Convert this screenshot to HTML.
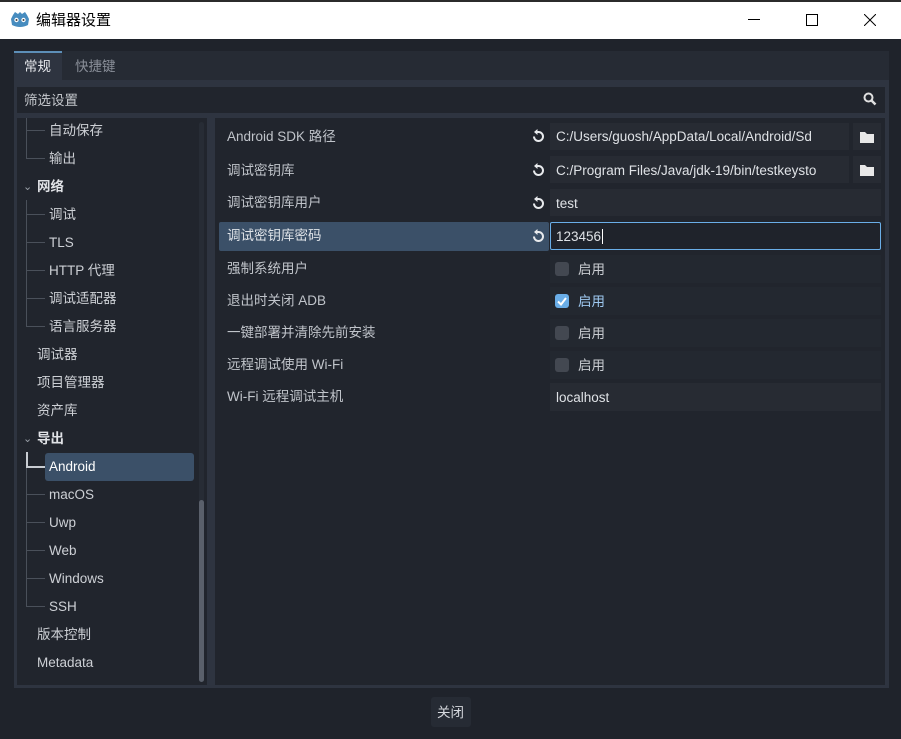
<!DOCTYPE html>
<html><head><meta charset="utf-8"><style>
*{margin:0;padding:0;box-sizing:border-box}
body{width:901px;height:739px;background:#1f232b;font-family:"Liberation Sans","Noto Sans CJK SC",sans-serif;font-size:13.5px;color:#cdd0d5;position:relative;overflow:hidden}
.a{position:absolute}
.t{position:absolute;white-space:nowrap;line-height:16px;margin-top:1px}
</style></head><body>
<div class="a" style="left:0;top:0;width:901px;height:2px;background:#2b2b2b"></div>
<div class="a" style="left:0;top:2px;width:901px;height:37px;background:#fff"></div>
<svg class="a" style="left:10px;top:11px" width="20" height="18" viewBox="0 0 20 18"><path d="M3 4 L5 1 L8 3 L10 1 L12 3 L15 1 L17 4 L19 8 L18 14 Q10 18 2 14 L1 8Z" fill="#478cbf"/><circle cx="6.5" cy="9" r="2.2" fill="#fff"/><circle cx="13.5" cy="9" r="2.2" fill="#fff"/><circle cx="6.5" cy="9" r="1" fill="#414042"/><circle cx="13.5" cy="9" r="1" fill="#414042"/></svg>
<div class="t" style="left:36px;top:12px;font-size:15px;color:#000">编辑器设置</div>
<div class="a" style="left:748px;top:19px;width:12px;height:1px;background:#000"></div>
<div class="a" style="left:806px;top:14px;width:12px;height:12px;border:1px solid #000"></div>
<svg class="a" style="left:864px;top:14px" width="12" height="12"><path d="M0 0L12 12M12 0L0 12" stroke="#000" stroke-width="1"/></svg>

<div class="a" style="left:14px;top:51px;width:875px;height:637px;background:#262b34"></div>
<div class="a" style="left:14px;top:51px;width:48px;height:29px;background:#2e3440;border-top:2px solid #5d8fb8"></div>
<div class="t" style="left:24px;top:58px;color:#e6e8ec">常规</div>
<div class="t" style="left:75px;top:58px;color:#8a8f99">快捷键</div>
<div class="a" style="left:14px;top:80px;width:875px;height:608px;background:#2e3440"></div>
<div class="a" style="left:17px;top:87px;width:868px;height:26px;background:#21252d"></div>
<div class="t" style="left:24px;top:92px;color:#c4c7cc">筛选设置</div>
<svg class="a" style="left:863px;top:92px" width="14" height="14"><circle cx="5.5" cy="5.5" r="4" stroke="#e0e0e0" stroke-width="2" fill="none"/><path d="M8.5 8.5L12.5 12.5" stroke="#e0e0e0" stroke-width="2.5"/></svg>

<div class="a" style="left:17px;top:118px;width:190px;height:567px;background:#21252d"></div>
<div class="a" style="left:199px;top:122px;width:5px;height:560px;background:#272c35;border-radius:3px"></div>
<div class="a" style="left:199px;top:500px;width:5px;height:182px;background:#5a606b;border-radius:3px"></div>
<div class="a" style="left:215px;top:118px;width:670px;height:567px;background:#21252d"></div>

<div class="a" style="left:26px;top:118px;width:1px;height:40px;background:#4a505a"></div>
<div class="a" style="left:26px;top:130px;width:19px;height:1px;background:#4a505a"></div>
<div class="a" style="left:26px;top:158px;width:19px;height:1px;background:#4a505a"></div>
<div class="a" style="left:26px;top:200px;width:1px;height:126px;background:#4a505a"></div>
<div class="a" style="left:26px;top:214px;width:19px;height:1px;background:#4a505a"></div>
<div class="a" style="left:26px;top:242px;width:19px;height:1px;background:#4a505a"></div>
<div class="a" style="left:26px;top:270px;width:19px;height:1px;background:#4a505a"></div>
<div class="a" style="left:26px;top:298px;width:19px;height:1px;background:#4a505a"></div>
<div class="a" style="left:26px;top:326px;width:19px;height:1px;background:#4a505a"></div>
<div class="a" style="left:26px;top:452px;width:1px;height:154px;background:#4a505a"></div>
<div class="a" style="left:26px;top:452px;width:2px;height:16px;background:#c8ccd2"></div>
<div class="a" style="left:26px;top:466px;width:19px;height:2px;background:#c8ccd2"></div>
<div class="a" style="left:26px;top:494px;width:19px;height:1px;background:#4a505a"></div>
<div class="a" style="left:26px;top:522px;width:19px;height:1px;background:#4a505a"></div>
<div class="a" style="left:26px;top:550px;width:19px;height:1px;background:#4a505a"></div>
<div class="a" style="left:26px;top:578px;width:19px;height:1px;background:#4a505a"></div>
<div class="a" style="left:26px;top:606px;width:19px;height:1px;background:#4a505a"></div>
<div class="a" style="left:45px;top:453px;width:149px;height:28px;background:#3b5068;border-radius:3px"></div>

<div class="t" style="left:49px;top:122px">自动保存</div>
<div class="t" style="left:49px;top:150px">输出</div>
<div class="t" style="left:23px;top:178px;color:#9aa0a8;font-size:11px">⌄</div>
<div class="t" style="left:37px;top:178px;font-weight:bold;color:#e0e2e6">网络</div>
<div class="t" style="left:49px;top:206px">调试</div>
<div class="t" style="left:49px;top:234px">TLS</div>
<div class="t" style="left:49px;top:262px">HTTP 代理</div>
<div class="t" style="left:49px;top:290px">调试适配器</div>
<div class="t" style="left:49px;top:318px">语言服务器</div>
<div class="t" style="left:37px;top:346px">调试器</div>
<div class="t" style="left:37px;top:374px">项目管理器</div>
<div class="t" style="left:37px;top:402px">资产库</div>
<div class="t" style="left:23px;top:430px;color:#9aa0a8;font-size:11px">⌄</div>
<div class="t" style="left:37px;top:430px;font-weight:bold;color:#e0e2e6">导出</div>
<div class="t" style="left:49px;top:458px;color:#fff">Android</div>
<div class="t" style="left:49px;top:486px">macOS</div>
<div class="t" style="left:49px;top:514px">Uwp</div>
<div class="t" style="left:49px;top:542px">Web</div>
<div class="t" style="left:49px;top:570px">Windows</div>
<div class="t" style="left:49px;top:598px">SSH</div>
<div class="t" style="left:37px;top:626px">版本控制</div>
<div class="t" style="left:37px;top:654px">Metadata</div>

<div class="a" style="left:219px;top:222px;width:330px;height:29px;background:#3b5068;border-radius:2px"></div>
<div class="t" style="left:227px;top:128px;color:#c0c4ca">Android SDK 路径</div>
<div class="t" style="left:227px;top:162px;color:#c0c4ca">调试密钥库</div>
<div class="t" style="left:227px;top:194px;color:#c0c4ca">调试密钥库用户</div>
<div class="t" style="left:227px;top:227px;color:#dfe3e8">调试密钥库密码</div>
<div class="t" style="left:227px;top:260px;color:#c0c4ca">强制系统用户</div>
<div class="t" style="left:227px;top:292px;color:#c0c4ca">退出时关闭 ADB</div>
<div class="t" style="left:227px;top:324px;color:#c0c4ca">一键部署并清除先前安装</div>
<div class="t" style="left:227px;top:356px;color:#c0c4ca">远程调试使用 Wi-Fi</div>
<div class="t" style="left:227px;top:388px;color:#c0c4ca">Wi-Fi 远程调试主机</div>

<svg width="0" height="0" style="position:absolute"><defs><g id="rv" transform="translate(14,0) scale(-1,1)"><path d="M11 7.5 A4.5 4.5 0 1 1 6.5 3 L8 3" stroke="#e8eaed" stroke-width="2" fill="none"/><path d="M7.5 0 L11 3 L7.5 6Z" fill="#e8eaed"/></g></defs></svg>
<svg class="a" style="left:531px;top:129px" width="14" height="14"><use href="#rv"/></svg>
<svg class="a" style="left:531px;top:163px" width="14" height="14"><use href="#rv"/></svg>
<svg class="a" style="left:531px;top:196px" width="14" height="14"><use href="#rv"/></svg>
<svg class="a" style="left:531px;top:229px" width="14" height="14"><use href="#rv"/></svg>

<div class="a" style="left:550px;top:123px;width:299px;height:27px;background:#272b33"></div>
<div class="a" style="left:853px;top:123px;width:28px;height:27px;background:#272b33"></div>
<div class="a" style="left:550px;top:156px;width:299px;height:27px;background:#272b33"></div>
<div class="a" style="left:853px;top:156px;width:28px;height:27px;background:#272b33"></div>
<svg class="a" style="left:860px;top:131px" width="14" height="12"><path d="M0 1h5l2 2h7v9H0z" fill="#e8e8e8"/></svg>
<svg class="a" style="left:860px;top:164px" width="14" height="12"><path d="M0 1h5l2 2h7v9H0z" fill="#e8e8e8"/></svg>
<div class="a" style="left:550px;top:189px;width:331px;height:27px;background:#272b33"></div>
<div class="a" style="left:550px;top:222px;width:331px;height:28px;background:#1f232b;border:1px solid #6aaee8;border-radius:2px"></div>
<div class="a" style="left:550px;top:255px;width:331px;height:28px;background:#232830"></div>
<div class="a" style="left:550px;top:287px;width:331px;height:28px;background:#232830"></div>
<div class="a" style="left:550px;top:319px;width:331px;height:28px;background:#232830"></div>
<div class="a" style="left:550px;top:351px;width:331px;height:28px;background:#232830"></div>
<div class="a" style="left:550px;top:383px;width:331px;height:28px;background:#272b33"></div>

<div class="t" style="left:556px;top:128px;color:#dfe2e6">C:/Users/guosh/AppData/Local/Android/Sd</div>
<div class="t" style="left:556px;top:162px;color:#dfe2e6">C:/Program Files/Java/jdk-19/bin/testkeysto</div>
<div class="t" style="left:556px;top:195px;color:#dfe2e6">test</div>
<div class="t" style="left:556px;top:228px;color:#dfe2e6">123456<span style="border-left:1px solid #fff;margin-left:1px"></span></div>
<div class="t" style="left:556px;top:389px;color:#dfe2e6">localhost</div>

<div class="a" style="left:555px;top:262px;width:14px;height:14px;background:#434851;border-radius:3px"></div>
<div class="a" style="left:555px;top:294px;width:14px;height:14px;background:#6aaee8;border-radius:3px"></div>
<svg class="a" style="left:555px;top:294px" width="14" height="14"><path d="M3 7.5L6 10.5L11 4" stroke="#fff" stroke-width="2" fill="none"/></svg>
<div class="a" style="left:555px;top:326px;width:14px;height:14px;background:#434851;border-radius:3px"></div>
<div class="a" style="left:555px;top:358px;width:14px;height:14px;background:#434851;border-radius:3px"></div>
<div class="t" style="left:578px;top:261px;color:#c9ccd1">启用</div>
<div class="t" style="left:578px;top:293px;color:#9ec8f0">启用</div>
<div class="t" style="left:578px;top:325px;color:#c9ccd1">启用</div>
<div class="t" style="left:578px;top:357px;color:#c9ccd1">启用</div>

<div class="a" style="left:431px;top:697px;width:40px;height:30px;background:#262b34;border-radius:3px"></div>
<div class="t" style="left:437px;top:704px;color:#d6d9de">关闭</div>
</body></html>
